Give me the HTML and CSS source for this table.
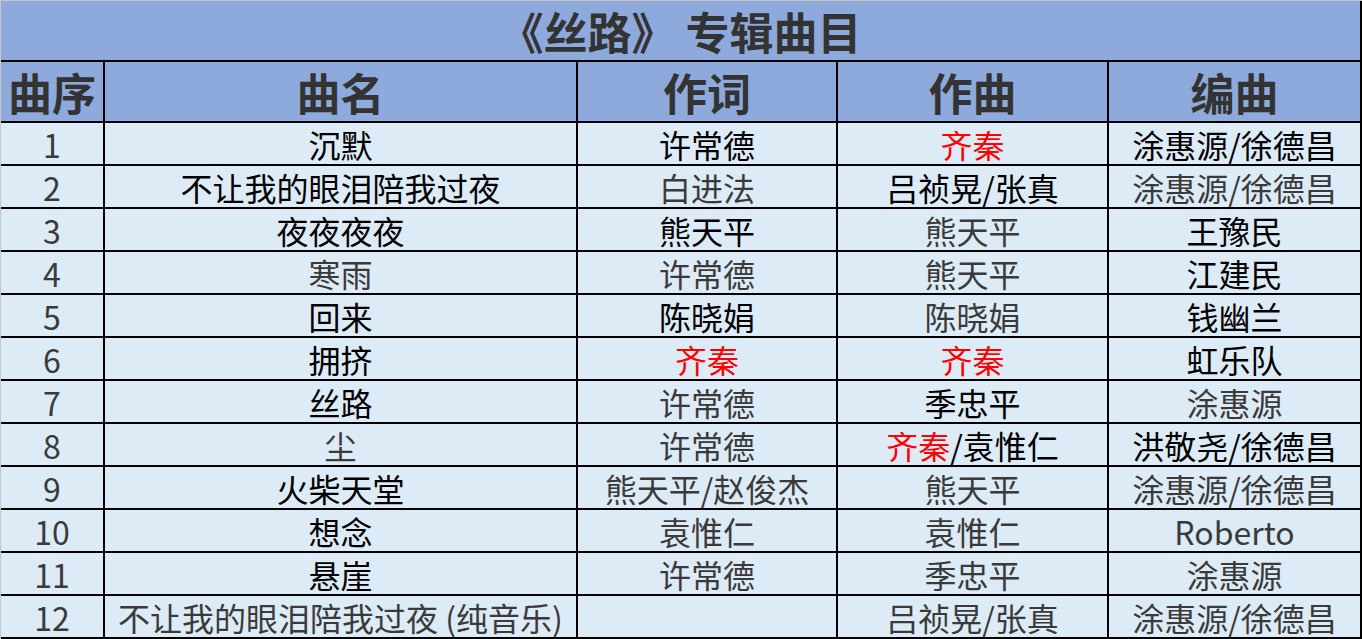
FILE: index.html
```html
<!DOCTYPE html>
<html lang="zh-CN">
<head>
<meta charset="utf-8">
<title>《丝路》 专辑曲目</title>
<link rel="stylesheet" href="styles.css">
</head>
<body>
<div class="sheet">
  <div class="title">《丝路》 专辑曲目</div>

  <div class="hd">曲序</div>
  <div class="hd">曲名</div>
  <div class="hd">作词</div>
  <div class="hd">作曲</div>
  <div class="hd">编曲</div>

  <div class="c g">1</div>
  <div class="c k">沉默</div>
  <div class="c k">许常德</div>
  <div class="c r">齐秦</div>
  <div class="c k">涂惠源/徐德昌</div>

  <div class="c g">2</div>
  <div class="c k">不让我的眼泪陪我过夜</div>
  <div class="c g">白进法</div>
  <div class="c k">吕祯晃/张真</div>
  <div class="c g">涂惠源/徐德昌</div>

  <div class="c g">3</div>
  <div class="c k">夜夜夜夜</div>
  <div class="c k">熊天平</div>
  <div class="c g">熊天平</div>
  <div class="c k">王豫民</div>

  <div class="c g">4</div>
  <div class="c g">寒雨</div>
  <div class="c g">许常德</div>
  <div class="c g">熊天平</div>
  <div class="c k">江建民</div>

  <div class="c g">5</div>
  <div class="c k">回来</div>
  <div class="c k">陈晓娟</div>
  <div class="c g">陈晓娟</div>
  <div class="c k">钱幽兰</div>

  <div class="c g">6</div>
  <div class="c k">拥挤</div>
  <div class="c r">齐秦</div>
  <div class="c r">齐秦</div>
  <div class="c k">虹乐队</div>

  <div class="c g">7</div>
  <div class="c k">丝路</div>
  <div class="c g">许常德</div>
  <div class="c k">季忠平</div>
  <div class="c g">涂惠源</div>

  <div class="c g">8</div>
  <div class="c g">尘</div>
  <div class="c g">许常德</div>
  <div class="c k"><span class="r">齐秦</span>/袁惟仁</div>
  <div class="c k">洪敬尧/徐德昌</div>

  <div class="c g">9</div>
  <div class="c k">火柴天堂</div>
  <div class="c g">熊天平/赵俊杰</div>
  <div class="c g">熊天平</div>
  <div class="c g">涂惠源/徐德昌</div>

  <div class="c g">10</div>
  <div class="c k">想念</div>
  <div class="c g">袁惟仁</div>
  <div class="c g">袁惟仁</div>
  <div class="c g">Roberto</div>

  <div class="c g">11</div>
  <div class="c k">悬崖</div>
  <div class="c g">许常德</div>
  <div class="c g">季忠平</div>
  <div class="c g">涂惠源</div>

  <div class="c g">12</div>
  <div class="c g">不让我的眼泪陪我过夜 (纯音乐)</div>
  <div class="c g"></div>
  <div class="c g">吕祯晃/张真</div>
  <div class="c g">涂惠源/徐德昌</div>
</div>
</body>
</html>
```

FILE: styles.css
```css
html, body {
  margin: 0;
  padding: 0;
  background: #ffffff;
}

.sheet {
  display: grid;
  grid-template-columns: 104px 473px 260px 271px 253px;
  grid-template-rows: 61px 61px repeat(12, 43px);
  width: 1361px;
  border-top: 1px solid #c6c6c6;
  border-left: 1px solid #c6c6c6;
  font-family: "Noto Sans CJK SC", "Noto Sans", sans-serif;
}

.title {
  grid-column: 1 / -1;
  background: #8ea9db;
  color: #333333;
  font-size: 44px;
  font-weight: 700;
  line-height: 1;
  display: flex;
  align-items: center;
  justify-content: center;
  border-right: 2px solid #000;
  border-bottom: 2px solid #000;
  white-space: pre;
}

.hd {
  background: #8ea9db;
  color: #333333;
  font-size: 44px;
  font-weight: 700;
  line-height: 1;
  display: flex;
  align-items: center;
  justify-content: center;
  border-right: 2px solid #000;
  border-bottom: 2px solid #000;
}

.c {
  background: #ddebf7;
  font-size: 32px;
  display: flex;
  align-items: center;
  justify-content: center;
  border-right: 2px solid #000;
  border-bottom: 2px solid #000;
  white-space: nowrap;
  line-height: 1;
}

.k { color: #000000; }
.g { color: #3a3a3a; }
.r { color: #ff0000; }
```
